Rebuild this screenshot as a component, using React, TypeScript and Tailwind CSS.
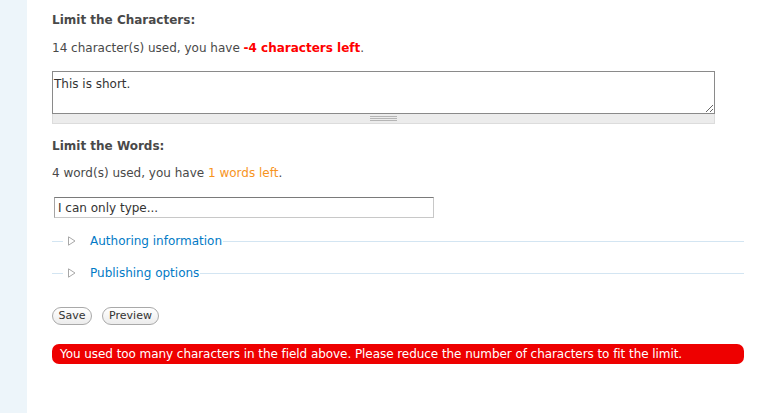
import React from "react";

function Legend({ label }: { label: string }) {
  return (
    <div className="flex items-center h-[18px]">
      <div className="w-[11px] h-px bg-[#d3e5f2]" />
      <svg className="ml-[5px]" width="8" height="10" viewBox="0 0 8 10">
        <path d="M0.5 0.8 L7 5 L0.5 9.2 Z" fill="none" stroke="#a8a8a8" strokeWidth="1" />
      </svg>
      <a className="ml-[14px] text-[#027ac6] whitespace-nowrap" href="#">{label}</a>
      <div className="flex-1 h-px bg-[#d3e5f2] ml-px" />
    </div>
  );
}

export default function App() {
  return (
    <div className="flex w-[767px] h-[413px] bg-white text-[#494949] text-[12px] leading-[18px] overflow-hidden" style={{ fontFamily: "'DejaVu Sans', Verdana, sans-serif" }}>
      <div className="w-[27px] shrink-0 bg-[#edf5fa]" />
      <div className="flex-1 pl-[25px] pr-[23px] pt-[11px]">
        <div className="font-bold h-[18px]">Limit the Characters:</div>
        <div className="mt-[10px] h-[18px]">
          14 character(s) used, you have <span className="font-bold text-[#ff0000]">-4 characters left</span>.
        </div>
        <div className="mt-[14px] w-[663px]">
          <textarea
            className="block w-full h-[43px] border border-[#8a8a8a] px-[1px] py-[3px] text-[#333] outline-none leading-[18px]"
            defaultValue="This is short."
            style={{ fontFamily: "'DejaVu Sans', Verdana, sans-serif", fontSize: "12px" }}
          />
          <div className="h-[10px] bg-[#ececec] border border-t-0 border-[#dcdcdc] flex flex-col items-center justify-center gap-px">
            <div className="w-[27px] h-px bg-[#b5b5b5]" />
            <div className="w-[27px] h-px bg-[#b5b5b5]" />
            <div className="w-[27px] h-px bg-[#b5b5b5]" />
          </div>
        </div>
        <div className="font-bold h-[18px] mt-[13px]">Limit the Words:</div>
        <div className="mt-[9px] h-[18px]">
          4 word(s) used, you have <span className="text-[#f7941d]">1 words left</span>.
        </div>
        <div className="mt-[15px] ml-[2px] w-[380px] h-[21px] border border-[#c8c8c8] border-t-[#7a7a7a] border-l-[#a5a5a5] px-[3px] flex items-center text-[#333]">
          I can only type...
        </div>
        <div className="mt-[14px]">
          <Legend label="Authoring information" />
        </div>
        <div className="mt-[14px]">
          <Legend label="Publishing options" />
        </div>
        <div className="mt-[25px] flex gap-[10px] text-[11px]">
          <button className="h-[18px] w-[40px] rounded-full border border-[#a9a9a9] bg-gradient-to-b from-white to-[#ececec] text-[#333] leading-[16px]">Save</button>
          <button className="h-[18px] w-[57px] rounded-full border border-[#a9a9a9] bg-gradient-to-b from-white to-[#ececec] text-[#333] leading-[16px]">Preview</button>
        </div>
        <div className="mt-[19px] h-[20px] rounded-[7px] bg-[#ee0000] text-white pl-[8px] flex items-center text-[12px] tracking-[-0.06px] whitespace-nowrap">
          You used too many characters in the field above. Please reduce the number of characters to fit the limit.
        </div>
      </div>
    </div>
  );
}
